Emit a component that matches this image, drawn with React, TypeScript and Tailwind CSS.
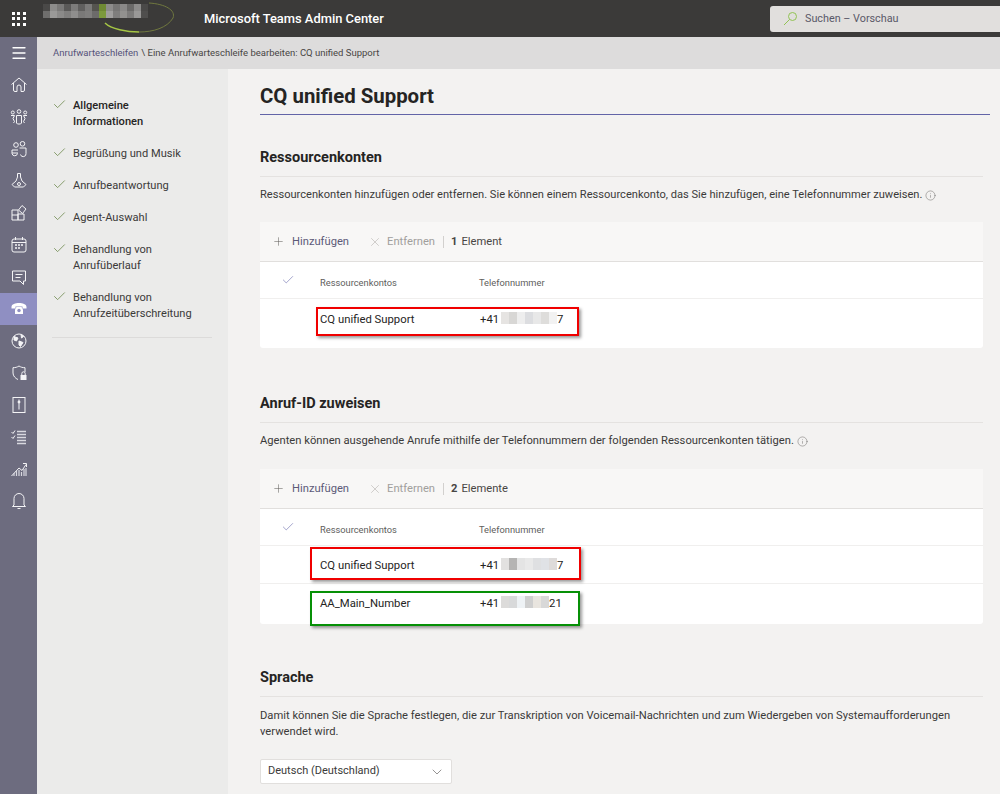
import { Check, ChevronDown, Info, Menu, Plus, X } from "lucide-react";
import { ReactNode } from "react";

const font = { fontFamily: 'Roboto, "Open Sans", sans-serif' };

const steps = [
  ["Allgemeine", "Informationen"],
  ["Begrüßung und Musik"],
  ["Anrufbeantwortung"],
  ["Agent-Auswahl"],
  ["Behandlung von", "Anrufüberlauf"],
  ["Behandlung von", "Anrufzeitüberschreitung"],
];

// pixelated company logo, two rows of mosaic blocks
const logoBlocks = [
  "#4a4948", "#8d8c8b", "#7a7978", "#5a5958", "#7d7c7b", "#605f5e", "#7b7a79", "#55544f", "#6f8a33", "#8d8c8b", "#777675", "#8a8988", "#6b6a69", "#8d8c8b", "#4a4948",
  "#6f6e6d", "#9a9998", "#8b8a89", "#807f7e", "#8f8e8d", "#7a7978", "#7f7e7d", "#6c6b6a", "#7c9a3c", "#a09f9e", "#7f7e7d", "#92918f", "#7c7b7a", "#999897", "#4f4e4d",
];

function Glyph({ children }: { children: ReactNode }) {
  return (
    <div className="h-8 w-[37px] flex items-center justify-center">
      <svg width="18" height="18" viewBox="0 0 18 18" fill="none" stroke="#f4f4f6" strokeWidth="1">
        {children}
      </svg>
    </div>
  );
}

function Rail() {
  return (
    <div className="w-[37px] shrink-0 bg-[#6d6c7f] flex flex-col">
      <div className="h-8 flex items-center justify-center text-white">
        <Menu size={18} strokeWidth={1.7} />
      </div>
      <Glyph>
        <path d="M1.500 8.500 9 2l7.500 6.500M3.500 7v7a1.500 1.500 0 0 0 1.500 1.500h2V11a2 2 0 0 1 4 0v4.500h2a1.500 1.500 0 0 0 1.500-1.500V7" />
      </Glyph>
      <Glyph>
        <circle cx="2.800" cy="4.500" r="1.500" />
        <circle cx="9" cy="3.500" r="1.800" />
        <circle cx="15.200" cy="4.500" r="1.500" />
        <path d="M1 7.500h3.500L3 10.500l1.500 3-1 1.500M6.500 7.500h5V15l-1 1h-3l-1-1zM17 7.500h-3.500l1.500 3-1.500 3 1 1.500" />
      </Glyph>
      <Glyph>
        <circle cx="6" cy="5" r="2.300" />
        <circle cx="12.500" cy="3.800" r="2.300" />
        <path d="M9.500 8h6.500v5.500a2.800 2.800 0 0 1-5.500 1M2 10h6M2 10v3.500a2.800 2.800 0 0 0 5.500 0M2 13h6" />
      </Glyph>
      <Glyph>
        <path d="M7.500 1.500h3V5l1.500 4 4 3.500-2.500 2.500H4.500L2 12.500 6 9l1.500-4z" />
        <circle cx="9" cy="12" r="1.500" />
      </Glyph>
      <Glyph>
        <path d="M2 6h6v10H2zM8 10h6v6H8zM2 11h6M12 1.500l4 3.500-3.500 4.500L8.500 6z" />
      </Glyph>
      <Glyph>
        <rect x="2" y="3" width="14" height="13" rx="2" />
        <path d="M5.500 1v3M12.500 1v3M2 6.500h14" />
        <path d="M5 9h2M8 9h2M11 9h2M5 12h2M8 12h2" strokeWidth="1.600" />
      </Glyph>
      <Glyph>
        <path d="M2.500 3h13v10h-2v3.500L10 13H2.500z" />
        <path d="M5.500 6.500h7M5.500 9.500h5" />
      </Glyph>
      <div className="h-8 w-[37px] bg-[#8f8fc2] flex items-center justify-center">
        <svg width="18" height="18" viewBox="0 0 18 18" fill="#fff">
          <path d="M1.500 7c0-3 4-4 7.500-4s7.500 1 7.500 4v1.500h-4V6.500h-7v2h-4z" />
          <path d="M5 9.500 6.500 7h5L13 9.500V14H5z" />
          <circle cx="9" cy="10.500" r="1.700" fill="#8f8fc2" />
        </svg>
      </div>
      <Glyph>
        <circle cx="9" cy="9" r="7" />
        <path d="M4 4.500 8 6 6.500 9 4 8zM9 9l4 1.500-2.500 4L9 13zM11 2.500l2.500 2-2 1.500z" fill="#f4f4f6" />
      </Glyph>
      <Glyph>
        <path d="M9 2c2 1.200 3.500 1.700 6 1.700V8M3 3.700C5.500 3.700 7 3.200 9 2M3 3.700V9c0 3 2.500 5.500 5 6.500" />
        <rect x="10.500" y="11" width="6" height="5" fill="#f4f4f6" stroke="none" />
        <path d="M11.800 11V9.500a1.700 1.700 0 0 1 3.400 0V11" />
      </Glyph>
      <Glyph>
        <rect x="3" y="1.500" width="12" height="15" />
        <path d="M9 3.500v10" strokeWidth="1.500" stroke="#c9c8d2" />
        <circle cx="9" cy="6" r="1" fill="#f4f4f6" />
      </Glyph>
      <Glyph>
        <path d="M1.500 4 3 5.500 5 2.500M1.500 9 3 10.500 5 7.500" />
        <path d="M7 3.500h9M7 6.500h9M7 9.500h9M7 12.500h9M7 15.500h9" strokeWidth="1.300" stroke="#d8d8df" />
      </Glyph>
      <Glyph>
        <path d="M1.500 16 9 8l3 2.500 4-6M13 3.500h3.500V7" />
        <path d="M4 16v-3M6.500 16v-5M9 16v-6M11.500 16v-4M14 16V9M16 16V8" strokeWidth="1.200" stroke="#d8d8df" />
      </Glyph>
      <Glyph>
        <path d="M4 13V6.500a5 5 0 0 1 10 0V13l1.500 1.500h-13z" />
        <path d="M7.500 16.500h3" />
      </Glyph>
    </div>
  );
}

function Blur({ colors }: { colors: string[] }) {
  return (
    <span className="inline-flex h-3 ml-[2px] align-[-1px]">
      {colors.map((c, i) => (
        <span key={i} className="w-2 h-3" style={{ backgroundColor: c }} />
      ))}
    </span>
  );
}

function Row({ name, phone, box, last, pad }: { name: string; phone: ReactNode; box?: string; last?: boolean; pad: string }) {
  return (
    <div className={`relative flex h-[38px] ${pad} text-[11.300px] leading-[17px] text-[#252423] ${last ? "" : "border-b border-[#f0efee]"}`}>
      <div className="w-[219px] pl-[60px] shrink-0">{name}</div>
      <div className="pl-px whitespace-nowrap">{phone}</div>
      {box && <div className={box} />}
    </div>
  );
}

function AccountTable({ count, label, children }: { count: string; label: string; children: ReactNode }) {
  return (
    <div className="rounded-[3px]">
      <div className="h-[40px] bg-[#f8f7f6] border-b border-[#e1dfdd] flex items-center pl-3 text-[11.200px]">
        <Plus size={13} strokeWidth={1} className="text-[#605e5c]" />
        <span className="ml-[7px] mt-[2px] text-[#5c5a78]">Hinzufügen</span>
        <X size={14} strokeWidth={1} className="ml-[19px] text-[#b3b0ad]" />
        <span className="ml-[5px] mt-[2px] text-[#a19f9d]">Entfernen</span>
        <span className="ml-2 h-3 border-l border-[#d2d0ce]" />
        <span className="ml-[7px] mt-[2px] font-bold text-[#484644]">{count}</span>
        <span className="ml-1 mt-[2px] text-[#484644]">{label}</span>
      </div>
      <div className="bg-white rounded-b-[3px]">
        <div className="relative flex h-[37px] pt-[15px] text-[9.300px] leading-3 text-[#605e5c] border-b border-[#f0efee]">
          <Check size={14} strokeWidth={1} className="absolute left-[21px] top-[11px] text-[#6264a7]" />
          <div className="w-[219px] pl-[60px] shrink-0">Ressourcenkontos</div>
          <div>Telefonnummer</div>
        </div>
        {children}
      </div>
    </div>
  );
}

function SectionTitle({ children }: { children: ReactNode }) {
  return <div className="h-[30px] pt-px text-[14.500px] leading-[20px] font-bold text-[#252423] border-b border-[#e4e2e0]">{children}</div>;
}

export default function App() {
  return (
    <div style={font} className="w-[1000px] h-[794px] overflow-hidden flex flex-col bg-[#f3f2f1]">
      <header className="h-[37px] shrink-0 bg-[#3b3a39] flex items-center">
        <div className="w-[37px] flex justify-center">
          <div className="grid grid-cols-3 gap-[2.500px]">
            {Array.from({ length: 9 }).map((_, i) => (
              <span key={i} className="w-[3px] h-[3px] bg-white" />
            ))}
          </div>
        </div>
        <div className="relative w-[167px] h-[37px] shrink-0">
          <svg width="160" height="37" viewBox="0 0 160 37" fill="none" className="absolute left-0 top-0">
            <path d="M68 23c6 6 22 9 34 9" stroke="#a6c644" strokeWidth="1.500" />
            <path d="M102 32c14 0 28-4 34-14 3-8-8-14-24-15" stroke="#70783f" strokeWidth="1" />
          </svg>
          <div className="absolute left-[6px] top-[4px] grid grid-cols-[repeat(15,7px)] auto-rows-[7px]">
            {logoBlocks.map((c, i) => (
              <span key={i} style={{ backgroundColor: c }} />
            ))}
          </div>
        </div>
        <div className="text-[12.900px] font-medium text-white">Microsoft Teams Admin Center</div>
        <div className="ml-auto w-[230px] h-[26px] bg-[#e1dfdd] rounded-l-[3px] flex items-center pl-[13px] text-[10.800px] text-[#5a5968]">
          <svg width="15" height="15" viewBox="0 0 15 15" fill="none" stroke="#92c353" strokeWidth="1">
            <circle cx="9.500" cy="5.500" r="4" />
            <path d="M6.500 8.500 1 14" />
          </svg>
          <span className="ml-[7px] mt-[2px]">Suchen – Vorschau</span>
        </div>
      </header>
      <div className="flex-1 flex min-h-0">
        <Rail />
        <div className="flex-1 flex flex-col min-w-0">
          <div className="h-8 shrink-0 bg-[#dddcdc] flex items-center pl-4 text-[9.500px] text-[#484644]">
            <span className="text-[#55537a]">Anrufwarteschleifen</span>
            <span className="ml-[3px]">\ Eine Anrufwarteschleife bearbeiten: CQ unified Support</span>
          </div>
          <div className="flex-1 flex min-h-0">
            <nav className="w-[191px] shrink-0 bg-[#ebebea] pt-[29px] pl-[15px] pr-4">
              <div className="border-b border-[#dcdbda] pb-[15px]">
                {steps.map((s, i) => (
                  <div key={i} className="flex mb-4 last:mb-0">
                    <Check size={15} strokeWidth={1.300} className="-mt-px text-[#6f8a4f] shrink-0" />
                    <div className={`ml-[6px] text-[11.100px] leading-4 ${i === 0 ? "font-medium text-[#252423]" : "text-[#3b3a39]"}`}>
                      {s.map((l) => (
                        <div key={l}>{l}</div>
                      ))}
                    </div>
                  </div>
                ))}
              </div>
            </nav>
            <main className="flex-1 pl-8 pr-[10px] min-w-0">
              <h1 className="h-[46px] pt-[15px] text-[20.400px] leading-[25px] font-bold text-[#252423] border-b border-[#6264a7]">CQ unified Support</h1>
              <div className="pr-[7px]">
                <section className="mt-[32px]">
                  <SectionTitle>Ressourcenkonten</SectionTitle>
                  <p className="mt-[10px] flex items-center text-[11.100px] leading-4 text-[#3b3a39] whitespace-nowrap">
                    Ressourcenkonten hinzufügen oder entfernen. Sie können einem Ressourcenkonto, das Sie hinzufügen, eine Telefonnummer zuweisen.
                    <Info size={11} strokeWidth={1} className="ml-[3px] text-[#605e5c]" />
                  </p>
                  <div className="mt-[19px]">
                    <AccountTable count="1" label="Element">
                      <Row
                        last
                        pad="pt-[12px]"
                        name="CQ unified Support"
                        phone={
                          <>
                            +41<Blur colors={["#e6e4e2", "#d8d7d5", "#eeeeee", "#dcdde0", "#e8e8e8", "#dedddb", "#f2f2f2"]} />7
                          </>
                        }
                        box="absolute left-[56px] top-[8px] w-[263px] h-[29px] border-2 border-[#f00000] shadow-[2px_2px_3px_rgba(0,0,0,0.4)]"
                      />
                      <div className="h-[11px]" />
                    </AccountTable>
                  </div>
                </section>
                <section className="mt-[45px]">
                  <SectionTitle>Anruf-ID zuweisen</SectionTitle>
                  <p className="mt-[10px] flex items-center text-[11.200px] leading-4 text-[#3b3a39] whitespace-nowrap">
                    Agenten können ausgehende Anrufe mithilfe der Telefonnummern der folgenden Ressourcenkonten tätigen.
                    <Info size={11} strokeWidth={1} className="ml-[3px] text-[#605e5c]" />
                  </p>
                  <div className="mt-[20px]">
                    <AccountTable count="2" label="Elemente">
                      <Row
                        pad="pt-[11px]"
                        name="CQ unified Support"
                        phone={
                          <>
                            +41<Blur colors={["#e2e1e0", "#b5b4b3", "#e4e4e4", "#e9e9e9", "#dfe0e2", "#e0e2e6", "#dedbda"]} />7
                          </>
                        }
                        box="absolute left-[50px] top-px w-[271px] h-[33px] border-2 border-[#f00000] shadow-[2px_2px_3px_rgba(0,0,0,0.4)]"
                      />
                      <Row
                        last
                        pad="pt-[11px]"
                        name="AA_Main_Number"
                        phone={
                          <>
                            +41<Blur colors={["#dcdbda", "#d8d9da", "#eef2f5", "#cfcfcf", "#e9e5df", "#d8d8d8"]} />21
                          </>
                        }
                        box="absolute left-[50px] top-[7px] w-[270px] h-[35px] border-2 border-[#069006] shadow-[2px_2px_3px_rgba(0,0,0,0.4)]"
                      />
                      <div className="h-[2px]" />
                    </AccountTable>
                  </div>
                </section>
                <section className="mt-[43px]">
                  <SectionTitle>Sprache</SectionTitle>
                  <p className="mt-[11px] text-[11.200px] leading-4 text-[#3b3a39]">
                    Damit können Sie die Sprache festlegen, die zur Transkription von Voicemail-Nachrichten und zum Wiedergeben von Systemaufforderungen verwendet wird.
                  </p>
                  <div className="mt-[19px] w-[192px] h-[25px] bg-white border border-[#e1dfdd] rounded-[2px] flex items-center pl-[7px] pr-[6px] text-[11px] text-[#3b3a39]">
                    Deutsch (Deutschland)
                    <ChevronDown size={16} strokeWidth={1} className="ml-auto text-[#605e5c]" />
                  </div>
                </section>
              </div>
            </main>
          </div>
        </div>
      </div>
    </div>
  );
}
